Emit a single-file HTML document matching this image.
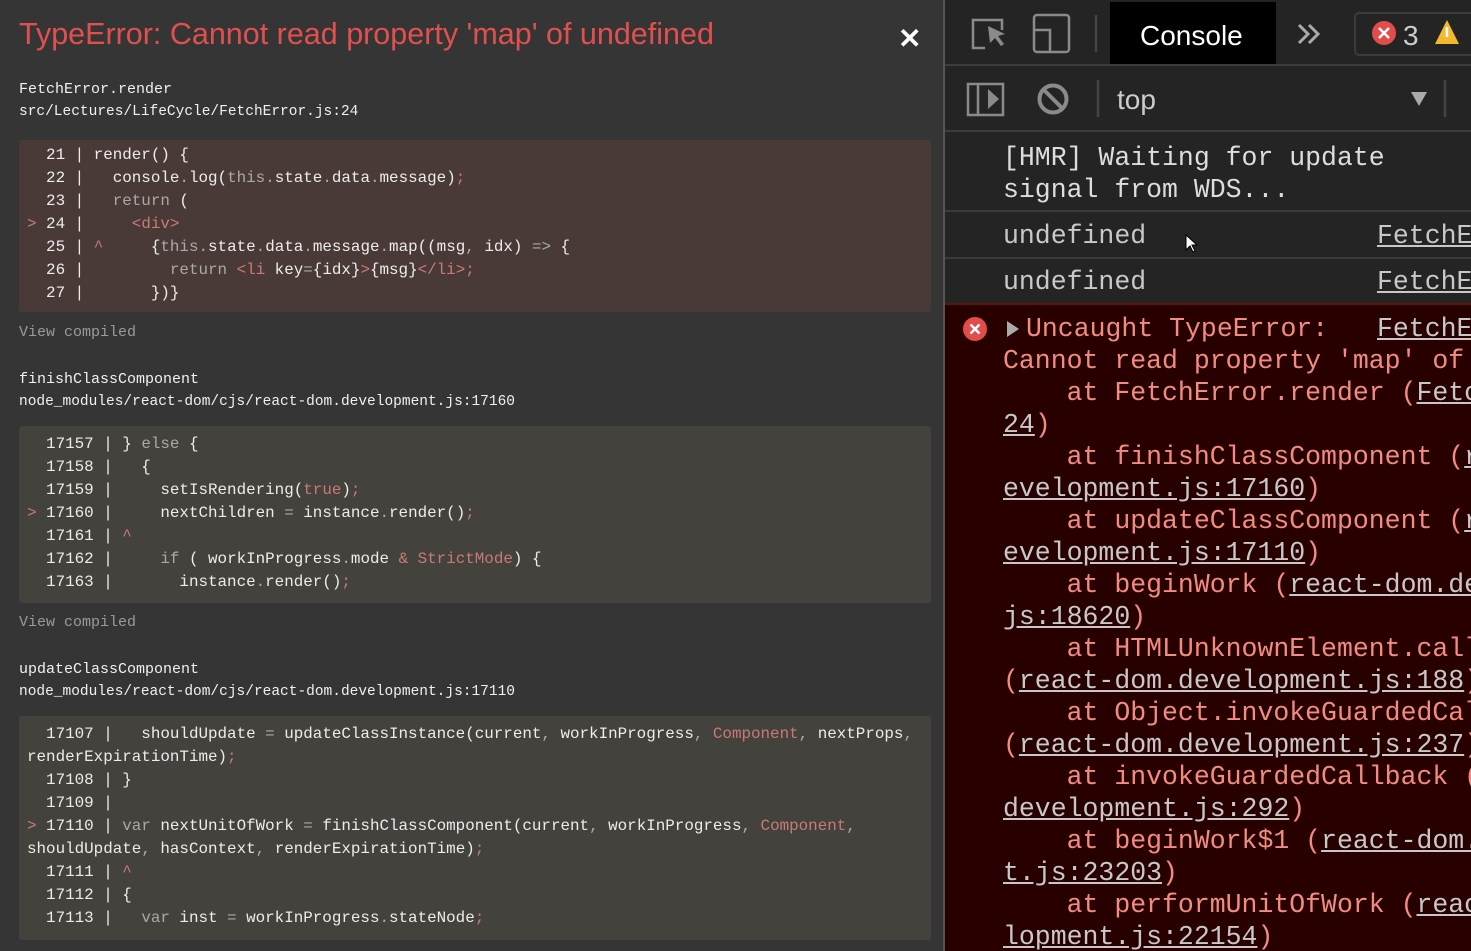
<!DOCTYPE html>
<html><head><meta charset="utf-8"><style>
*{margin:0;padding:0;box-sizing:border-box}
body{width:1471px;height:951px;overflow:hidden;background:#353535;position:relative;font-family:"Liberation Mono",monospace}
#left{position:absolute;left:0;top:0;width:943px;height:951px;background:#353535}
.title{position:absolute;left:19px;top:17px;font:30.5px "Liberation Sans",sans-serif;color:#e0504f;white-space:nowrap}
.close{position:absolute;left:898px;top:22px;color:#fff;font:bold 28px "Liberation Sans",sans-serif}
.t{position:absolute;left:19px;font-size:15px;color:#f0f0f0;white-space:pre}
.vc{position:absolute;left:19px;font-size:15px;color:#9a9a9a}
.blk{position:absolute;left:19px;width:912px;border-radius:3px;background:#44423c}
pre{position:absolute;left:27px;font-family:"Liberation Mono",monospace;font-size:15.9px;line-height:23px;color:#ececec;letter-spacing:-0.01px}
.g{color:#a9a9a9}.r{color:#c97a78}
#right{position:absolute;left:943px;top:0;width:528px;height:951px;background:#242424;border-left:2px solid #555;overflow:hidden}
.bar{position:absolute;left:0;width:528px;border-bottom:2px solid #3c3c3c}
.c{position:absolute;left:58px;font-size:26.5px;white-space:pre;color:#ddd;line-height:32px}
.e{color:#f28b82}.u{text-decoration:underline;color:#c8c8c8}
</style></head><body>
<div id="left">
<div class="title">TypeError: Cannot read property 'map' of undefined</div>
<div class="close">✕</div>
<div class="t" style="top:81px">FetchError.render</div>
<div class="t" style="top:104px;font-size:14.5px">src/Lectures/LifeCycle/FetchError.js:24</div>
<div class="blk" style="top:140px;height:172px;background:#4a3a37"></div>
<pre style="top:144px">  21 | render() {
  22 |   console<span class="g">.</span>log(<span class="g">this.</span>state<span class="g">.</span>data<span class="g">.</span>message)<span class="r">;</span>
  23 |   <span class="g">return</span> (
<span class="r">&gt;</span> 24 |     <span class="r">&lt;div&gt;</span>
  25 | <span class="r">^</span>     {<span class="g">this.</span>state<span class="g">.</span>data<span class="g">.</span>message<span class="g">.</span>map((msg<span class="g">,</span> idx) <span class="g">=&gt;</span> {
  26 |         <span class="g">return</span> <span class="r">&lt;li</span> key<span class="g">=</span>{idx}<span class="r">&gt;</span>{msg}<span class="r">&lt;/li&gt;;</span>
  27 |       })}</pre>
<div class="vc" style="top:324px">View compiled</div>
<div class="t" style="top:371px">finishClassComponent</div>
<div class="t" style="top:394px;font-size:14.5px">node_modules/react-dom/cjs/react-dom.development.js:17160</div>
<div class="blk" style="top:426px;height:177px"></div>
<pre style="top:433px">  17157 | } <span class="g">else</span> {
  17158 |   {
  17159 |     setIsRendering(<span class="r">true</span>)<span class="r">;</span>
<span class="r">&gt;</span> 17160 |     nextChildren <span class="g">=</span> instance<span class="g">.</span>render()<span class="r">;</span>
  17161 | <span class="r">^</span>
  17162 |     <span class="g">if</span> ( workInProgress<span class="g">.</span>mode <span class="r">&amp;</span> <span class="r">StrictMode</span>) {
  17163 |       instance<span class="g">.</span>render()<span class="r">;</span></pre>
<div class="vc" style="top:614px">View compiled</div>
<div class="t" style="top:661px">updateClassComponent</div>
<div class="t" style="top:684px;font-size:14.5px">node_modules/react-dom/cjs/react-dom.development.js:17110</div>
<div class="blk" style="top:716px;height:224px"></div>
<pre style="top:723px">  17107 |   shouldUpdate <span class="g">=</span> updateClassInstance(current<span class="g">,</span> workInProgress<span class="g">,</span> <span class="r">Component</span><span class="g">,</span> nextProps<span class="g">,</span>
renderExpirationTime)<span class="r">;</span>
  17108 | }
  17109 |
<span class="r">&gt;</span> 17110 | <span class="g">var</span> nextUnitOfWork <span class="g">=</span> finishClassComponent(current<span class="g">,</span> workInProgress<span class="g">,</span> <span class="r">Component</span><span class="g">,</span>
shouldUpdate<span class="g">,</span> hasContext<span class="g">,</span> renderExpirationTime)<span class="r">;</span>
  17111 | <span class="r">^</span>
  17112 | {
  17113 |   <span class="g">var</span> inst <span class="g">=</span> workInProgress<span class="g">.</span>stateNode<span class="r">;</span></pre>
</div>
<div id="right">
<div class="bar" style="top:0;height:66px"></div>
<div class="bar" style="top:66px;height:66px"></div>
<svg style="position:absolute;left:0;top:0" width="528" height="132">
<g fill="none" stroke="#8a8a8a" stroke-width="2.5">
<path d="M40 48 H28 V20 H57 V30"/>
<rect x="89" y="15" width="35" height="37" rx="3"/><path d="M89 30 H105 V52"/>
<line x1="151" y1="15" x2="151" y2="52" stroke="#444"/>
<rect x="23" y="84" width="35" height="31"/><line x1="33" y1="84" x2="33" y2="115"/>
<circle cx="108" cy="99" r="13.5" stroke-width="4"/><line x1="99" y1="90" x2="117" y2="108" stroke-width="4"/>
<line x1="153" y1="80" x2="153" y2="117" stroke="#444"/>
<line x1="500" y1="80" x2="500" y2="117" stroke="#444"/>
</g>
<path d="M43 26 l17 8 -7 2 6 8 -3 2 -6 -8 -5 5z" fill="#8a8a8a"/>
<path d="M43 89 l11 10 -11 10z" fill="#8a8a8a"/>
<rect x="165" y="2" width="166" height="62" fill="#000"/>
<text x="195" y="45" font-family="Liberation Sans" font-size="28" fill="#fff">Console</text>
<path d="M354 25 l9 9 -9 9 M364 25 l9 9 -9 9" stroke="#aaa" stroke-width="3" fill="none"/>
<rect x="410" y="13" width="130" height="42" rx="4" fill="none" stroke="#3c3c3c" stroke-width="2"/>
<circle cx="439" cy="33" r="12" fill="#e24c4b"/><path d="M434 28 l10 10 M444 28 l-10 10" stroke="#fff" stroke-width="2.5"/>
<text x="458" y="45" font-family="Liberation Sans" font-size="28" fill="#ccc">3</text>
<path d="M502 20 l12 24 h-24z" fill="#f2b92e"/><rect x="500.7" y="27" width="2.5" height="10" fill="#fff"/>
<text x="172" y="109" font-family="Liberation Sans" font-size="28" fill="#ccc">top</text>
<path d="M466 92 h16 l-8 14z" fill="#aaa"/>
</svg>
<div class="c" style="top:142px">[HMR] Waiting for update
signal from WDS...</div>
<div style="position:absolute;left:0;top:210px;width:528px;border-top:2px solid #3a3a3a"></div>
<div class="c" style="top:220px;color:#c8c8c8">undefined</div>
<div class="c u" style="top:220px;left:432px">FetchError</div>
<div style="position:absolute;left:0;top:257px;width:528px;border-top:2px solid #3a3a3a"></div>
<div class="c" style="top:266px;color:#c8c8c8">undefined</div>
<div class="c u" style="top:266px;left:432px">FetchError</div>
<svg style="position:absolute;left:240px;top:234px" width="14" height="20"><path d="M1 1 v15 l4 -4 3 6 2 -1 -3 -6 5 0z" fill="#fff" stroke="#000"/></svg>
<div style="position:absolute;left:0;top:303px;width:528px;height:648px;background:#290000;border-top:2px solid #5a1515"></div>
<svg style="position:absolute;left:17px;top:316px" width="26" height="26"><circle cx="13" cy="13" r="12" fill="#e24c4b"/><path d="M8.5 8.5 l9 9 M17.5 8.5 l-9 9" stroke="#fff" stroke-width="2.5"/></svg>
<svg style="position:absolute;left:60px;top:320px" width="16" height="18"><path d="M2 1 l12 8 -12 8z" fill="#aaa"/></svg>
<div class="c e" style="top:313px;left:81px">Uncaught TypeError:</div>
<div class="c u" style="top:313px;left:432px">FetchError</div>
<div class="c e" style="top:345px">Cannot read property 'map' of undefined
    at FetchError.render (<span class="u">FetchError.js:</span>
<span class="u">24</span>)
    at finishClassComponent (<span class="u">react-dom.d</span>
<span class="u">evelopment.js:17160</span>)
    at updateClassComponent (<span class="u">react-dom.d</span>
<span class="u">evelopment.js:17110</span>)
    at beginWork (<span class="u">react-dom.development.</span>
<span class="u">js:18620</span>)
    at HTMLUnknownElement.callCallback
(<span class="u">react-dom.development.js:188</span>)
    at Object.invokeGuardedCallbackDev
(<span class="u">react-dom.development.js:237</span>)
    at invokeGuardedCallback (<span class="u">react-dom.</span>
<span class="u">development.js:292</span>)
    at beginWork$1 (<span class="u">react-dom.developmen</span>
<span class="u">t.js:23203</span>)
    at performUnitOfWork (<span class="u">react-dom.deve</span>
<span class="u">lopment.js:22154</span>)</div>
</div>
</body></html>
